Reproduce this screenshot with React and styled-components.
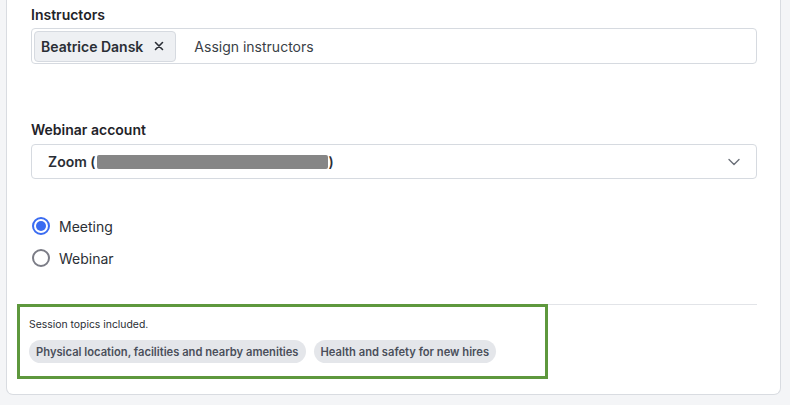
import React from 'react';
import styled, { createGlobalStyle } from 'styled-components';

const GlobalStyle = createGlobalStyle`
    body {
        margin: 0;
        background: #f4f5f7;
        font-family: Inter, "Liberation Sans", sans-serif;
        color: #22262c;
    }
`;

const Page = styled.div`
    width: 790px;
    height: 405px;
    overflow: hidden;
`;

const Card = styled.div`
    margin-left: 6px;
    width: 775px;
    box-sizing: border-box;
    background: #fff;
    border: 1px solid #d9dce1;
    border-top: none;
    border-radius: 0 0 7px 7px;
    padding: 5px 23px 15px 24px;
`;

const Label = styled.div`
    font-size: 14px;
    font-weight: 600;
    line-height: 20px;
    color: #1f2329;
    margin-top: ${p => p.$top || 0}px;
    margin-bottom: ${p => p.$gap || 3}px;
`;

const Field = styled.div`
    height: ${p => p.$h || 36}px;
    box-sizing: border-box;
    border: 1px solid #d6dae0;
    border-radius: 4px;
    display: flex;
    align-items: center;
    padding: ${p => p.$pad || '0 2px'};
`;

const Chip = styled.div`
    height: 31px;
    box-sizing: border-box;
    display: flex;
    align-items: center;
    gap: 11px;
    padding: 0 11px 0 6px;
    background: #eef0f3;
    border: 1px solid #d6dae0;
    border-radius: 4px;
    font-size: 14px;
    font-weight: 600;
    color: #2a2e35;
`;

const Placeholder = styled.span`
    margin-left: 18px;
    font-size: 14px;
    color: #3a3f47;
`;

const SelectValue = styled.div`
    flex: 1;
    display: flex;
    align-items: center;
    font-size: 14px;
    font-weight: 600;
    color: #2a2e35;
`;

const Redacted = styled.span`
    display: inline-block;
    width: 231px;
    height: 14px;
    background: #868686;
    border-radius: 2px;
    margin: 0 1px 0 1px;
`;

const RadioGroup = styled.div`
    margin-top: 35px;
    display: flex;
    flex-direction: column;
    gap: 8px;
`;

const RadioRow = styled.label`
    display: flex;
    align-items: center;
    gap: 9px;
    height: 24px;
    font-size: 14px;
    color: #2b2f36;
    margin-left: 1px;
`;

const RadioCircle = styled.span`
    width: 18px;
    height: 18px;
    box-sizing: border-box;
    border-radius: 50%;
    border: 2px solid ${p => (p.$checked ? '#3b6cf1' : '#7b7c86')};
    display: flex;
    align-items: center;
    justify-content: center;

    &::after {
        content: '';
        width: 10px;
        height: 10px;
        border-radius: 50%;
        background: ${p => (p.$checked ? '#3b6cf1' : 'transparent')};
    }
`;

const Footer = styled.div`
    margin-top: 34px;
    border-top: 1px solid #e2e4e8;
`;

const TopicsBox = styled.div`
    margin: -1px 0 0 -14px;
    width: 531px;
    height: 75px;
    box-sizing: border-box;
    border: 3px solid #5e983d;
    padding: 11px 9px 0;
`;

const TopicsTitle = styled.div`
    font-size: 10.4px;
    line-height: 14px;
    color: #2a2e35;
`;

const TopicList = styled.div`
    display: flex;
    gap: 8px;
    margin-top: 8px;
`;

const Topic = styled.span`
    height: 23px;
    display: inline-flex;
    align-items: center;
    padding: 0 7px;
    border-radius: 12px;
    background: #e4e6ea;
    font-size: 11.2px;
    font-weight: 600;
    color: #4a4f5a;
    white-space: nowrap;
`;

const Close = () => (
    <svg width="10" height="10" viewBox="0 0 10 10">
        <path d="M1.5 1.5l7 7M8.5 1.5l-7 7" stroke="#2a2e35" strokeWidth="1.6" strokeLinecap="round" />
    </svg>
);

const Chevron = () => (
    <svg width="12" height="8" viewBox="0 0 12 8">
        <path d="M1 1.5l5 5 5-5" stroke="#6b7079" strokeWidth="1.4" fill="none" strokeLinecap="round" strokeLinejoin="round" />
    </svg>
);

export default function App() {
    return (
        <Page>
            <GlobalStyle />
            <Card>
                <Label>Instructors</Label>
                <Field>
                    <Chip>
                        Beatrice Dansk
                        <Close />
                    </Chip>
                    <Placeholder>Assign instructors</Placeholder>
                </Field>

                <Label $top={56} $gap={4}>Webinar account</Label>
                <Field $h={35} $pad="0 16px 0 16px">
                    <SelectValue>
                        Zoom (<Redacted />)
                    </SelectValue>
                    <Chevron />
                </Field>

                <RadioGroup>
                    <RadioRow>
                        <RadioCircle $checked />
                        Meeting
                    </RadioRow>
                    <RadioRow>
                        <RadioCircle />
                        Webinar
                    </RadioRow>
                </RadioGroup>

                <Footer>
                    <TopicsBox>
                        <TopicsTitle>Session topics included.</TopicsTitle>
                        <TopicList>
                            <Topic>Physical location, facilities and nearby amenities</Topic>
                            <Topic>Health and safety for new hires</Topic>
                        </TopicList>
                    </TopicsBox>
                </Footer>
            </Card>
        </Page>
    );
}
